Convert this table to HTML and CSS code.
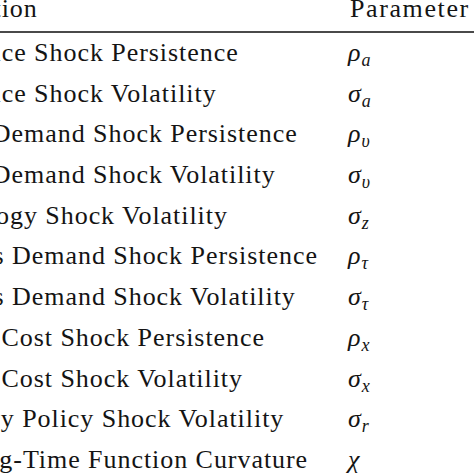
FILE: index.html
```html
<!DOCTYPE html>
<html>
<head>
<meta charset="utf-8">
<link rel="stylesheet" href="styles.css">
</head>
<body>
<div class="table">
  <div class="row head"><div class="desc">Description</div><div class="param title">Parameter</div></div>
  <div class="row"><div class="desc">Preference Shock Persistence</div><div class="param"><span class="sym">ρ</span><span class="sub">a</span></div></div>
  <div class="row"><div class="desc">Preference Shock Volatility</div><div class="param"><span class="sym">σ</span><span class="sub">a</span></div></div>
  <div class="row"><div class="desc">Money Demand Shock Persistence</div><div class="param"><span class="sym">ρ</span><span class="sub">υ</span></div></div>
  <div class="row"><div class="desc">Money Demand Shock Volatility</div><div class="param"><span class="sym">σ</span><span class="sub">υ</span></div></div>
  <div class="row"><div class="desc">Technology Shock Volatility</div><div class="param"><span class="sym">σ</span><span class="sub">z</span></div></div>
  <div class="row"><div class="desc">Deposits Demand Shock Persistence</div><div class="param"><span class="sym">ρ</span><span class="sub">τ</span></div></div>
  <div class="row"><div class="desc">Deposits Demand Shock Volatility</div><div class="param"><span class="sym">σ</span><span class="sub">τ</span></div></div>
  <div class="row"><div class="desc">Trading Cost Shock Persistence</div><div class="param"><span class="sym">ρ</span><span class="sub">x</span></div></div>
  <div class="row"><div class="desc">Trading Cost Shock Volatility</div><div class="param"><span class="sym">σ</span><span class="sub">x</span></div></div>
  <div class="row"><div class="desc">Monetary Policy Shock Volatility</div><div class="param"><span class="sym">σ</span><span class="sub">r</span></div></div>
  <div class="row"><div class="desc">Shopping-Time Function Curvature</div><div class="param"><span class="sym">χ</span></div></div>
</div>
</body>
</html>
```

FILE: styles.css
```css
html, body {
  margin: 0;
  padding: 0;
  background: #ffffff;
  overflow: hidden;
}

.table {
  margin: -11px 0 0 -94px;
  width: 620px;
  font-family: "Liberation Serif", "Times New Roman", serif;
  font-size: 26px;
  line-height: 40.7px;
  letter-spacing: 0.95px;
  color: #141414;
}

.row {
  display: grid;
  grid-template-columns: 442px auto;
  height: 40.7px;
  white-space: nowrap;
}

.head {
  box-sizing: border-box;
  height: 44px;
  padding-bottom: 1.3px;
  border-bottom: 2px solid #4a4a4a;
}

.title {
  padding-left: 2px;
  letter-spacing: 1.6px;
}

.sym {
  font-style: italic;
  letter-spacing: 0;
  padding-right: 1px;
  line-height: 0;
}

.sub {
  font-style: italic;
  font-size: 18px;
  letter-spacing: 0;
  line-height: 0;
  vertical-align: -5px;
}
```
